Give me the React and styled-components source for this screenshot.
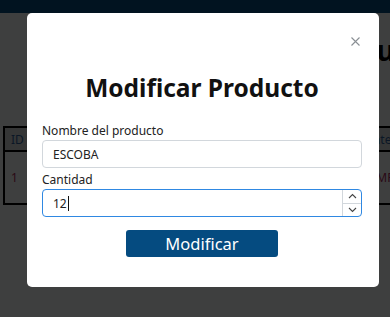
import React from "react";
import styled, { createGlobalStyle } from "styled-components";

const Global = createGlobalStyle`
  html, body { margin: 0; padding: 0; background: #3e3f3f; overflow: hidden; }
  body { font-family: "Noto Sans", "Open Sans", sans-serif; width: 390px; height: 317px; }
  * { box-sizing: border-box; }
`;

const Page = styled.div`
  width: 390px;
  height: 317px;
  background: #3e3f3f;
  overflow: hidden;
`;

const NavBar = styled.div`
  height: 13px;
  background: #011320;
`;

const Heading = styled.h1`
  margin: 19px 0 0 0;
  padding-left: 312px;
  white-space: nowrap;
  font-family: "Noto Sans", sans-serif;
  font-weight: 700;
  font-size: 28px;
  line-height: 36px;
  color: #000;
`;

const Table = styled.table`
  margin: 58px 0 0 3px;
  border-collapse: collapse;
  table-layout: fixed;
  width: 520px;
  border: 2px solid #000;
  font-family: "Noto Sans", sans-serif;
  font-size: 12px;
`;

const Th = styled.th`
  background: #353636;
  border-bottom: 2px solid #000;
  height: 24px;
  padding: 0 6px;
  text-align: left;
  font-weight: 400;
  color: #0b1726;
  width: ${(p) => p.$w}px;
  white-space: nowrap;
  overflow: hidden;
`;

const Td = styled.td`
  height: 53px;
  padding: 0 6px;
  color: #2a0a16;
  white-space: nowrap;
  overflow: hidden;
`;

const Backdrop = styled.div`
  position: fixed;
  inset: 0;
`;

const Modal = styled.div`
  position: absolute;
  left: 27px;
  top: 13px;
  width: 352px;
  height: 274px;
  background: #fff;
  border-radius: 5px;
  padding: 20px 17px 0 15px;
  display: flex;
  flex-direction: column;
`;

const CloseRow = styled.div`
  height: 16px;
  display: flex;
  justify-content: flex-end;
  align-items: center;
`;

const CloseBtn = styled.button`
  border: 0;
  background: none;
  padding: 0;
  width: 12px;
  height: 12px;
  margin-right: 1px;
  display: flex;
  align-items: center;
  justify-content: center;
  cursor: pointer;
`;

const Title = styled.h2`
  margin: 21px 0 0 0;
  text-align: center;
  font-family: "Noto Sans", sans-serif;
  font-weight: 700;
  font-size: 24.5px;
  line-height: 36px;
  color: #111;
`;

const Form = styled.div`
  margin-top: 17px;
  display: flex;
  flex-direction: column;
`;

const Label = styled.label`
  font-size: 12px;
  line-height: 16px;
  color: #222;
  margin-top: ${(p) => p.$mt || 0}px;
  margin-bottom: 1px;
`;

const Field = styled.div`
  height: 28px;
  border: 1px solid ${(p) => (p.$focus ? "#2f88e2" : "#d2d7dc")};
  border-radius: 4px;
  display: flex;
  align-items: stretch;
  font-size: 12px;
  color: #222;
`;

const Value = styled.div`
  flex: 1;
  display: flex;
  align-items: center;
  padding-left: 10px;
`;

const Caret = styled.span`
  display: inline-block;
  width: 1px;
  height: 15px;
  background: #111;
  margin-left: 1px;
`;

const Spinner = styled.div`
  width: 19px;
  border-left: 1px solid #d2d7dc;
  display: flex;
  flex-direction: column;
`;

const SpinBtn = styled.div`
  flex: 1;
  display: flex;
  align-items: center;
  justify-content: center;
  border-top: ${(p) => (p.$bottom ? "1px solid #d2d7dc" : "none")};
`;

const Submit = styled.button`
  align-self: center;
  margin-top: 13px;
  width: 152px;
  height: 27px;
  background: #054b80;
  color: #fff;
  border: 0;
  border-radius: 3px;
  font-family: "Noto Sans", sans-serif;
  font-size: 16.5px;
  line-height: 27px;
  padding: 0;
`;

const Chevron = ({ up }) => (
  <svg width="9" height="6" viewBox="0 0 9 6" fill="none">
    <path
      d={up ? "M1 5 L4.5 1.5 L8 5" : "M1 1 L4.5 4.5 L8 1"}
      stroke="#444"
      strokeWidth="1.1"
    />
  </svg>
);

export default function App() {
  return (
    <Page>
      <Global />
      <NavBar />
      <Heading>Productos</Heading>
      <Table>
        <thead>
          <tr>
            <Th $w={24}>ID</Th>
            <Th $w={200}>Nombre</Th>
            <Th $w={132}>Cantidad</Th>
            <Th $w={164}>Categoría</Th>
          </tr>
        </thead>
        <tbody>
          <tr>
            <Td>1</Td>
            <Td>ESCOBA</Td>
            <Td>12</Td>
            <Td>LIMPIEZA</Td>
          </tr>
        </tbody>
      </Table>
      <Backdrop>
        <Modal>
          <CloseRow>
            <CloseBtn aria-label="Cerrar">
              <svg width="9" height="9" viewBox="0 0 9 9">
                <path d="M0.5 0.5 L8.5 8.5 M8.5 0.5 L0.5 8.5" stroke="#8a8f94" strokeWidth="1.1" />
              </svg>
            </CloseBtn>
          </CloseRow>
          <Title>Modificar Producto</Title>
          <Form>
            <Label>Nombre del producto</Label>
            <Field>
              <Value>ESCOBA</Value>
            </Field>
            <Label $mt={4}>Cantidad</Label>
            <Field $focus>
              <Value>
                12<Caret />
              </Value>
              <Spinner>
                <SpinBtn>
                  <Chevron up />
                </SpinBtn>
                <SpinBtn $bottom>
                  <Chevron />
                </SpinBtn>
              </Spinner>
            </Field>
            <Submit>Modificar</Submit>
          </Form>
        </Modal>
      </Backdrop>
    </Page>
  );
}
